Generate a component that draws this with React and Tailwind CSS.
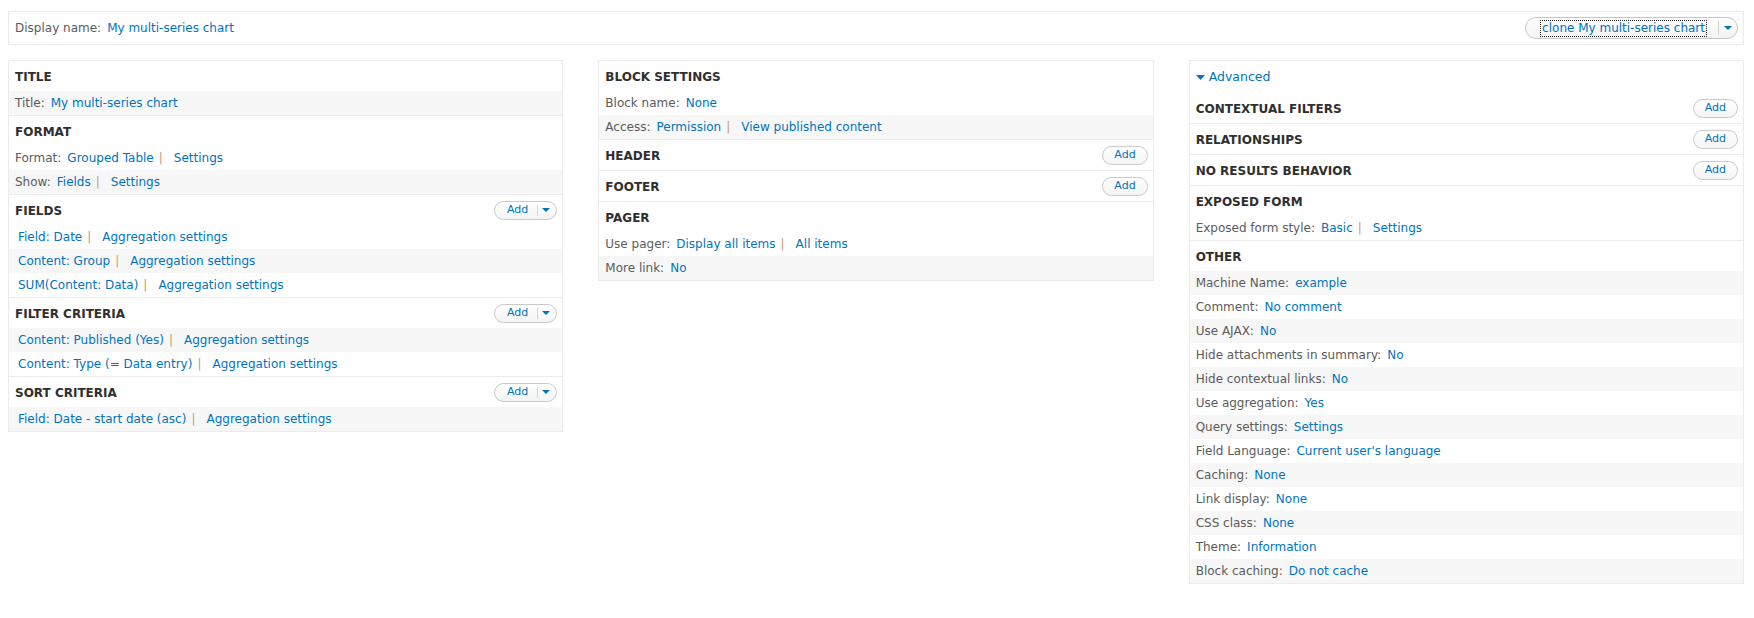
import React from 'react';

const LINK = 'text-[#0074bd]';

const leftSections = [
  {
    title: 'Title',
    rows: [{ label: 'Title:', links: ['My multi-series chart'], gray: true }],
  },
  {
    title: 'Format',
    rows: [
      { label: 'Format:', links: ['Grouped Table', 'Settings'] },
      { label: 'Show:', links: ['Fields', 'Settings'], gray: true },
    ],
  },
  {
    title: 'Fields',
    add: true,
    dropdown: true,
    indent: true,
    rows: [
      { links: ['Field: Date', 'Aggregation settings'] },
      { links: ['Content: Group', 'Aggregation settings'], gray: true },
      { links: ['SUM(Content: Data)', 'Aggregation settings'] },
    ],
  },
  {
    title: 'Filter criteria',
    add: true,
    dropdown: true,
    indent: true,
    rows: [
      { links: ['Content: Published (Yes)', 'Aggregation settings'], gray: true },
      { links: ['Content: Type (= Data entry)', 'Aggregation settings'] },
    ],
  },
  {
    title: 'Sort criteria',
    add: true,
    dropdown: true,
    indent: true,
    rows: [{ links: ['Field: Date - start date (asc)', 'Aggregation settings'], gray: true }],
  },
];

const middleSections = [
  {
    title: 'Block settings',
    rows: [
      { label: 'Block name:', links: ['None'] },
      { label: 'Access:', links: ['Permission', 'View published content'], gray: true },
    ],
  },
  { title: 'Header', add: true },
  { title: 'Footer', add: true },
  {
    title: 'Pager',
    rows: [
      { label: 'Use pager:', links: ['Display all items', 'All items'] },
      { label: 'More link:', links: ['No'], gray: true },
    ],
  },
];

const otherRows = [
  ['Machine Name:', 'example'],
  ['Comment:', 'No comment'],
  ['Use AJAX:', 'No'],
  ['Hide attachments in summary:', 'No'],
  ['Hide contextual links:', 'No'],
  ['Use aggregation:', 'Yes'],
  ['Query settings:', 'Settings'],
  ['Field Language:', "Current user's language"],
  ['Caching:', 'None'],
  ['Link display:', 'None'],
  ['CSS class:', 'None'],
  ['Theme:', 'Information'],
  ['Block caching:', 'Do not cache'],
];

const rightSections = [
  { title: 'Contextual filters', add: true },
  { title: 'Relationships', add: true },
  { title: 'No results behavior', add: true },
  {
    title: 'Exposed form',
    rows: [{ label: 'Exposed form style:', links: ['Basic', 'Settings'] }],
  },
  {
    title: 'Other',
    rows: otherRows.map(([label, link], i) => ({ label, links: [link], gray: i % 2 === 0 })),
  },
];

const Caret = ({ className = '', w = 8, h = 4 }) => (
  <svg width={w} height={h} viewBox={`0 0 ${w} ${h}`} className={className}>
    <polygon points={`0,0 ${w},0 ${w / 2},${h}`} fill="#0074bd" />
  </svg>
);

const AddButton = ({ dropdown }) => (
  <div className="flex h-[19px] items-center rounded-full border border-[#cacaca] bg-linear-to-b from-white to-[#f4f4f4] text-[11px]">
    {dropdown ? (
      <>
        <span className={`pl-[12px] pr-[9px] ${LINK}`}>Add</span>
        <span className="h-[11px] w-px bg-[#d6d6d6]" />
        <Caret className="ml-[4px] mr-[6px]" />
      </>
    ) : (
      <span className={`px-[11px] ${LINK}`}>Add</span>
    )}
  </div>
);

const SettingRow = ({ row, indent }) => (
  <div
    className={`flex h-[24px] items-center whitespace-nowrap ${indent ? 'px-[9px]' : 'px-[6px]'} ${
      row.gray ? 'bg-[#f7f7f7]' : ''
    }`}
  >
    {row.label && <span className="mr-[6px] text-[#5b5b5b]">{row.label}</span>}
    {row.links.map((link, i) => (
      <React.Fragment key={i}>
        {i > 0 && <span className="ml-[5px] mr-[11px] text-[#c29a72]">|</span>}
        <a href="#" className={LINK}>
          {link}
        </a>
      </React.Fragment>
    ))}
  </div>
);

const Section = ({ section, first }) => (
  <div className={first ? '' : 'border-t border-[#ececec]'}>
    <div className="flex h-[30px] items-center justify-between pl-[6px] pr-[5px]">
      <h3 className="pt-[2px] text-[12px] font-bold uppercase text-[#2f2f2f]">{section.title}</h3>
      {section.add && <AddButton dropdown={section.dropdown} />}
    </div>
    {section.rows?.map((row, i) => (
      <SettingRow key={i} row={row} indent={section.indent} />
    ))}
  </div>
);

const Panel = ({ children }) => (
  <div className="self-start border border-[#ebebeb] bg-white">{children}</div>
);

const App = () => {
  return (
    <div className="min-h-[618px] bg-white pl-[8px] pr-[10px] pt-[11px] font-['DejaVu_Sans','Verdana',sans-serif] text-[12px] leading-normal text-[#333]">
      {/* Display name bar */}
      <div className="flex h-[34px] items-center justify-between border border-[#ebebeb] pl-[6px] pr-[5px]">
        <div className="whitespace-nowrap">
          <span className="mr-[6px] text-[#5b5b5b]">Display name:</span>
          <a href="#" className={LINK}>
            My multi-series chart
          </a>
        </div>
        <div className="flex h-[22px] items-center rounded-full border border-[#c8c8c8] bg-linear-to-b from-white to-[#f3f3f3]">
          <span className={`ml-[14px] border border-dotted border-[#222] px-[1px] leading-[15px] ${LINK}`}>
            clone My multi-series chart
          </span>
          <span className="ml-[11px] h-[14px] w-px bg-[#d4d4d4]" />
          <Caret className="ml-[5px] mr-[5px]" />
        </div>
      </div>

      {/* Columns */}
      <div className="mt-[15px] grid grid-cols-3 items-start gap-x-[35px]">
        <Panel>
          {leftSections.map((s, i) => (
            <Section key={s.title} section={s} first={i === 0} />
          ))}
        </Panel>

        <Panel>
          {middleSections.map((s, i) => (
            <Section key={s.title} section={s} first={i === 0} />
          ))}
        </Panel>

        <Panel>
          <div className="flex h-[32px] items-center pl-[6px]">
            <Caret w={9} h={5} className="mr-[4px]" />
            <a href="#" className={`text-[12.5px] ${LINK}`}>
              Advanced
            </a>
          </div>
          {rightSections.map((s, i) => (
            <Section key={s.title} section={s} first={i === 0} />
          ))}
        </Panel>
      </div>
    </div>
  );
};

export default App;
